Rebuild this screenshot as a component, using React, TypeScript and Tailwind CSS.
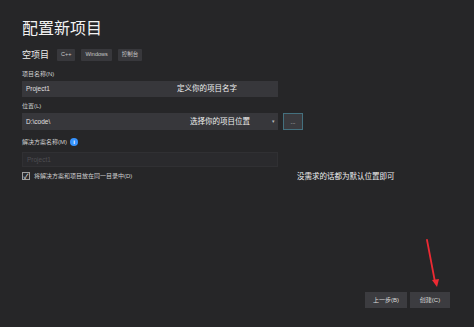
import React from "react";

const FONT = "font-['Liberation_Sans','Noto_Sans_CJK_SC',sans-serif]";

function Tag({ label }: { label: string }) {
  return (
    <span className="h-[12px] px-[4px] flex items-center bg-[#38383c] text-[#c8c8c8] text-[5.5px] leading-none rounded-[1px]">
      {label}
    </span>
  );
}

function Label({ text, children }: { text: string; children?: React.ReactNode }) {
  return (
    <div className="h-[8px] flex items-center gap-[3px] text-[#cfcfcf] text-[6px] leading-none">
      {text}
      {children}
    </div>
  );
}

export default function App() {
  return (
    <div className={`relative w-[474px] h-[327px] bg-[#262628] pl-[22px] pt-[18px] flex flex-col ${FONT}`}>
      {/* Title */}
      <h1 className="h-[22px] flex items-center text-[16px] leading-none text-[#f2f2f2]">
        配置新项目
      </h1>

      {/* Template + tags */}
      <div className="mt-[8px] h-[14px] flex items-center gap-[6px]">
        <span className="text-[9px] leading-none text-[#ececec] mr-[2px]">空项目</span>
        <Tag label="C++" />
        <Tag label="Windows" />
        <Tag label="控制台" />
      </div>

      {/* Project name */}
      <div className="mt-[8px]">
        <Label text="项目名称(N)" />
      </div>
      <div className="mt-[3px] w-[256px] h-[16px] bg-[#37373b] flex items-center pl-[4px] text-[6.5px] text-[#e0e0e0]">
        <span className="w-[151px]">Project1</span>
        <span className="text-[7.5px] text-[#f0f0f0]">定义你的项目名字</span>
      </div>

      {/* Location */}
      <div className="mt-[5px]">
        <Label text="位置(L)" />
      </div>
      <div className="mt-[3px] flex items-center gap-[5px]">
        <div className="w-[256px] h-[17px] bg-[#37373b] flex items-center pl-[4px] pr-[3px] text-[6.5px] text-[#e0e0e0]">
          <span className="w-[164px]">D:\code\</span>
          <span className="text-[7.5px] text-[#f0f0f0]">选择你的项目位置</span>
          <span className="ml-auto text-[5px] text-[#bbbbbb]">▾</span>
        </div>
        <div className="w-[20px] h-[17px] bg-[#3a3a3e] border border-[#44707e] flex items-end justify-center pb-[4px] text-[6px] leading-none text-[#dddddd]">
          ...
        </div>
      </div>

      {/* Solution name */}
      <div className="mt-[8px]">
        <Label text="解决方案名称(M)">
          <span className="w-[8px] h-[8px] rounded-full bg-[#3794ff] text-white text-[6px] leading-none font-bold flex items-center justify-center">
            i
          </span>
        </Label>
      </div>
      <div className="mt-[6px] w-[256px] h-[15px] bg-[#2a2a2d] border border-[#303033] flex items-center pl-[4px] text-[6.5px] text-[#4e4e52]">
        Project1
      </div>

      {/* Checkbox row */}
      <div className="mt-[4px] h-[10px] flex items-center">
        <div className="w-[275px] flex items-center gap-[4px]">
          <span className="w-[8px] h-[8px] border border-[#a0a0a0] bg-[#2b2b2e] flex items-center justify-center text-[7px] leading-none text-[#e8e8e8]">
            ✓
          </span>
          <span className="text-[6px] leading-none text-[#cfcfcf]">将解决方案和项目放在同一目录中(D)</span>
        </div>
        <span className="mt-[2px] text-[7.5px] leading-none text-[#f0f0f0]">没需求的话都为默认位置即可</span>
      </div>

      {/* Footer buttons */}
      <div className="mt-auto mb-[19px] mr-[24px] flex justify-end gap-[3px]">
        <button className="w-[42px] h-[16px] bg-[#3c3c40] text-[6px] text-[#dcdcdc] flex items-center justify-center">
          上一步(B)
        </button>
        <button className="w-[40px] h-[16px] bg-[#3c3c40] text-[6px] text-[#dcdcdc] flex items-center justify-center">
          创建(C)
        </button>
      </div>

      {/* Red annotation arrow */}
      <svg className="absolute left-[420px] top-[236px]" width="24" height="54" viewBox="0 0 24 54">
        <path d="M7 4 L15 46" stroke="#ec2a33" strokeWidth="1.8" strokeLinecap="round" fill="none" />
        <path d="M12 44 L17 51 L19 43 Z" fill="#ec2a33" />
      </svg>
    </div>
  );
}
